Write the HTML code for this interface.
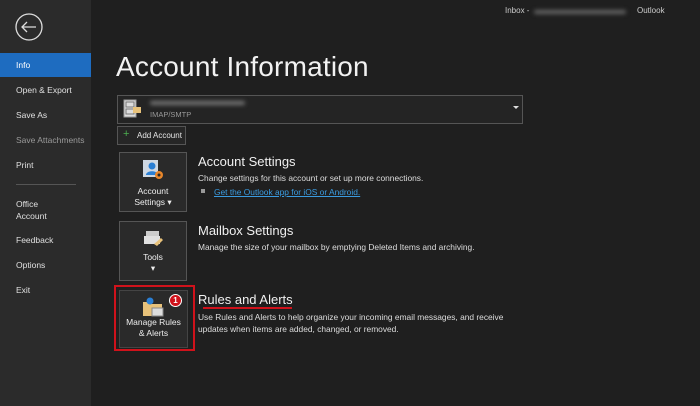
<!DOCTYPE html>
<html><head><style>
*{margin:0;padding:0;box-sizing:border-box}
body{width:700px;height:406px;background:#1f1f1f;font-family:"Liberation Sans",sans-serif;color:#e6e6e6;position:relative;overflow:hidden}
.a{position:absolute}
.side{left:0;top:0;width:91px;height:406px;background:#2b2b2b}
.mi{position:absolute;left:16px;font-size:8.5px;color:#e0e0e0}
.tile{position:absolute;background:#2a2a2a;border:1px solid #555;text-align:center;font-size:8.5px;color:#eee;line-height:11px}
.h{position:absolute;font-size:13px;color:#f0f0f0}
.p{position:absolute;font-size:8.4px;color:#ddd;line-height:12px}
.blur{filter:blur(2px);background:#888;height:4px;border-radius:2px}
</style></head><body>
<div class="a side"></div>
<svg class="a" style="left:14px;top:12px" width="30" height="30" viewBox="0 0 30 30"><circle cx="15" cy="15" r="13" fill="none" stroke="#ddd" stroke-width="1.3"/><path d="M8 15h14M13 10l-5 5 5 5" fill="none" stroke="#ddd" stroke-width="1.3"/></svg>
<div class="a" style="left:0;top:53px;width:91px;height:24px;background:#1e6cc0"></div>
<div class="mi" style="top:60px;color:#fff">Info</div>
<div class="mi" style="top:85px">Open &amp; Export</div>
<div class="mi" style="top:110px">Save As</div>
<div class="mi" style="top:135px;color:#9a9a9a">Save Attachments</div>
<div class="mi" style="top:160px">Print</div>
<div class="a" style="left:16px;top:184px;width:60px;height:1px;background:#555"></div>
<div class="mi" style="top:198px;line-height:12px">Office<br>Account</div>
<div class="mi" style="top:235px">Feedback</div>
<div class="mi" style="top:260px">Options</div>
<div class="mi" style="top:285px">Exit</div>

<div class="a" style="left:505px;top:6px;font-size:8px;color:#ccc">Inbox -</div>
<div class="a blur" style="left:534px;top:10px;width:92px;background:#666"></div>
<div class="a" style="left:637px;top:6px;font-size:8px;color:#ccc">Outlook</div>

<div class="a" style="left:116px;top:51px;font-size:28px;color:#f2f2f2;font-weight:300;letter-spacing:0.2px">Account Information</div>

<div class="a" style="left:117px;top:95px;width:406px;height:29px;border:1px solid #555;background:#242424"></div>
<svg class="a" style="left:122px;top:99px" width="20" height="20"><rect x="2" y="1" width="12" height="17" fill="#ddd" stroke="#999"/><rect x="4" y="3" width="8" height="5" fill="none" stroke="#777"/><rect x="4" y="10" width="8" height="5" fill="none" stroke="#777"/><rect x="11" y="8" width="8" height="6" fill="#e8c27a"/></svg>
<div class="a blur" style="left:150px;top:101px;width:95px;background:#777"></div>
<div class="a" style="left:150px;top:110px;font-size:7.5px;color:#999">IMAP/SMTP</div>
<div class="a" style="left:513px;top:106px;width:0;height:0;border-left:3px solid transparent;border-right:3px solid transparent;border-top:3px solid #ddd"></div>

<div class="a" style="left:117px;top:126px;width:69px;height:19px;border:1px solid #555;background:#262626;font-size:8px;color:#e6e6e6;padding:4px 0 0 19px">Add Account</div>
<div class="a" style="left:123px;top:128px;font-size:11px;color:#4caf50">+</div>

<div class="tile" style="left:119px;top:152px;width:68px;height:60px;padding-top:33px">Account<br>Settings ▾</div>
<svg class="a" style="left:142px;top:158px" width="24" height="24"><rect x="1" y="2" width="15" height="17" fill="#cfd8e3"/><circle cx="10" cy="8" r="3.5" fill="#2a7fd4"/><path d="M4 17c0-5 12-5 12 0z" fill="#2a7fd4"/><circle cx="17" cy="17" r="4" fill="#e8862a"/><circle cx="17" cy="17" r="1.5" fill="#2a2a2a"/></svg>
<div class="h" style="left:198px;top:154px">Account Settings</div>
<div class="p" style="left:198px;top:172px">Change settings for this account or set up more connections.</div>
<div class="a" style="left:201px;top:189px;width:4px;height:4px;background:#999"></div>
<div class="p" style="left:214px;top:186px;color:#3a9be0;text-decoration:underline">Get the Outlook app for iOS or Android.</div>

<div class="tile" style="left:119px;top:221px;width:68px;height:60px;padding-top:30px">Tools<br>▾</div>
<svg class="a" style="left:143px;top:230px" width="22" height="18"><rect x="3" y="1" width="13" height="9" fill="#ccc"/><rect x="1" y="6" width="16" height="8" fill="#e0e0e0"/><path d="M11 14l7-6 2 2-6 6z" fill="#e8c27a"/></svg>
<div class="h" style="left:198px;top:223px">Mailbox Settings</div>
<div class="p" style="left:198px;top:241px">Manage the size of your mailbox by emptying Deleted Items and archiving.</div>

<div class="a" style="left:114px;top:285px;width:81px;height:66px;border:2px solid #d0121b"></div>
<div class="tile" style="left:119px;top:290px;width:69px;height:58px;padding-top:26px;border-color:#444">Manage Rules<br>&amp; Alerts</div>
<svg class="a" style="left:142px;top:296px" width="22" height="22"><path d="M1 6h7l2 2h10v12H1z" fill="#e8c27a"/><circle cx="8" cy="5" r="3.5" fill="#2a7fd4"/><rect x="10" y="12" width="11" height="8" fill="#ddd" stroke="#888"/></svg>
<div class="a" style="left:169px;top:294px;width:13px;height:13px;border-radius:50%;background:#d0121b;border:1px solid #fff;color:#fff;font-size:8px;font-weight:bold;text-align:center;line-height:11px">1</div>
<div class="h" style="left:198px;top:292px">Rules and Alerts</div>
<div class="a" style="left:203px;top:307px;width:89px;height:2px;background:#d0121b"></div>
<div class="p" style="left:198px;top:311px">Use Rules and Alerts to help organize your incoming email messages, and receive<br>updates when items are added, changed, or removed.</div>
</body></html>
